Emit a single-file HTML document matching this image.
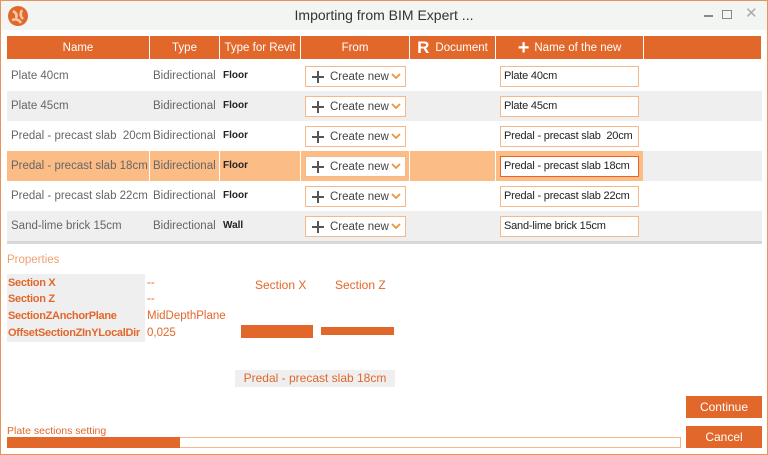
<!DOCTYPE html>
<html><head><meta charset="utf-8"><style>
*{margin:0;padding:0;box-sizing:border-box}
body{width:768px;height:455px;background:#fff;font-family:"Liberation Sans",sans-serif;font-size:11px;position:relative;overflow:hidden;color:#555}
.abs{position:absolute;white-space:nowrap}
.win{left:0;top:0;width:768px;height:455px;border:1px solid #e8935c}
.title{left:1px;top:1px;width:766px;height:29px;background:#f3f5f3}
.hd{top:36px;height:23px;background:#e2672a;color:#fff;font-size:11.5px;display:flex;align-items:center;justify-content:center}
.row{left:7px;width:755px;height:30px}
.cell{position:absolute;top:0;height:30px;line-height:30px;white-space:nowrap;font-size:11.5px;color:#666}
.combo{position:absolute;left:298px;top:5px;width:101px;height:21px;border:1px solid #f5b88a;background:#fff;line-height:20px;color:#444;font-size:11.5px;padding-left:24px;white-space:nowrap}
.combo:before{content:"";position:absolute;left:6px;top:9px;width:12px;height:2px;background:#555}
.combo:after{content:"";position:absolute;left:11px;top:4px;width:2px;height:12px;background:#555}
.chev{position:absolute;right:4px;top:5px}
.inp{position:absolute;left:493px;top:5px;width:139px;height:21px;border:1px solid #f5b88a;background:#fff;line-height:19px;color:#222;font-size:11px;letter-spacing:-0.2px;padding-left:3px;white-space:nowrap;overflow:hidden}
.or{color:#e2672a}
.pl{left:7px;width:138px;height:17px;line-height:17px;font-weight:bold;color:#e2672a;font-size:11px;letter-spacing:-0.3px;padding-left:1px;overflow:hidden}
.pv{left:147px;height:17px;line-height:17px;color:#e2672a;font-size:11.5px}
.btn{left:686px;width:76px;height:22px;background:#e2672a;color:#fff;text-align:center;line-height:22px;font-size:12px}
</style></head><body>
<div class="abs win"></div>
<div class="abs title"></div>
<svg class="abs" style="left:6px;top:5px" width="24" height="22" viewBox="0 0 24 22"><circle cx="12" cy="11" r="10" fill="#e2672a"/><path d="M7 6 Q12 9 10 13 M16 5 Q13 10 17 14 M6 15 Q12 13 15 18" stroke="#f7c9a8" stroke-width="2.5" fill="none"/></svg>
<div class="abs" style="left:0;width:768px;top:7px;text-align:center;font-size:14px;color:#333">Importing from BIM Expert ...</div>
<div class="abs" style="left:704px;top:15px;width:9px;height:2px;background:#888"></div>
<div class="abs" style="left:722px;top:10px;width:10px;height:9px;border:1.5px solid #888"></div>
<div class="abs" style="left:745px;top:4px;color:#aaa;font-size:15px">✕</div>

<div class="abs hd" style="left:7px;width:142px">Name</div>
<div class="abs hd" style="left:150px;width:69px">Type</div>
<div class="abs hd" style="left:220px;width:80px">Type for Revit</div>
<div class="abs hd" style="left:301px;width:108px">From</div>
<div class="abs hd" style="left:410px;width:85px"><b style="font-size:17px;margin-right:6px">R</b>Document</div>
<div class="abs hd" style="left:496px;width:147px"><b style="font-size:20px;margin-right:5px;line-height:10px">+</b>Name of the new</div>
<div class="abs hd" style="left:644px;width:117px"></div>

<div class="abs row" style="top:61px;background:#fff">
<div class="cell" style="left:4px">Plate 40cm</div><div class="cell" style="left:146px">Bidirectional</div><div class="cell" style="left:216px;font-weight:bold;font-size:10px;color:#222">Floor</div><div class="combo">Create new<svg class="chev" width="10" height="8"><path d="M1 2 L5 6 L9 2" stroke="#f0923c" stroke-width="1.8" fill="none"/></svg></div><div class="inp">Plate 40cm</div></div>
<div class="abs row" style="top:91px;background:#efefef">
<div class="cell" style="left:4px">Plate 45cm</div><div class="cell" style="left:146px">Bidirectional</div><div class="cell" style="left:216px;font-weight:bold;font-size:10px;color:#222">Floor</div><div class="combo">Create new<svg class="chev" width="10" height="8"><path d="M1 2 L5 6 L9 2" stroke="#f0923c" stroke-width="1.8" fill="none"/></svg></div><div class="inp">Plate 45cm</div></div>
<div class="abs row" style="top:121px;background:#fff">
<div class="cell" style="left:4px">Predal - precast slab&nbsp; 20cm</div><div class="cell" style="left:146px">Bidirectional</div><div class="cell" style="left:216px;font-weight:bold;font-size:10px;color:#222">Floor</div><div class="combo">Create new<svg class="chev" width="10" height="8"><path d="M1 2 L5 6 L9 2" stroke="#f0923c" stroke-width="1.8" fill="none"/></svg></div><div class="inp">Predal - precast slab&nbsp; 20cm</div></div>
<div class="abs row" style="top:151px;background:#efefef">
<div class="cell" style="left:0;width:636px;background:#fbbc85"></div>
<div class="cell" style="left:142px;width:1px;background:#fff"></div><div class="cell" style="left:212px;width:1px;background:#fff"></div><div class="cell" style="left:293px;width:1px;background:#fff"></div><div class="cell" style="left:402px;width:1px;background:#fff"></div><div class="cell" style="left:488px;width:1px;background:#fff"></div>
<div class="cell" style="left:4px">Predal - precast slab 18cm</div><div class="cell" style="left:146px">Bidirectional</div><div class="cell" style="left:216px;font-weight:bold;font-size:10px;color:#222">Floor</div><div class="combo">Create new<svg class="chev" width="10" height="8"><path d="M1 2 L5 6 L9 2" stroke="#f0923c" stroke-width="1.8" fill="none"/></svg></div><div class="inp" style="border-color:#e2672a">Predal - precast slab 18cm</div></div>
<div class="abs row" style="top:181px;background:#fff">
<div class="cell" style="left:4px">Predal - precast slab 22cm</div><div class="cell" style="left:146px">Bidirectional</div><div class="cell" style="left:216px;font-weight:bold;font-size:10px;color:#222">Floor</div><div class="combo">Create new<svg class="chev" width="10" height="8"><path d="M1 2 L5 6 L9 2" stroke="#f0923c" stroke-width="1.8" fill="none"/></svg></div><div class="inp">Predal - precast slab 22cm</div></div>
<div class="abs row" style="top:211px;background:#efefef">
<div class="cell" style="left:4px">Sand-lime brick 15cm</div><div class="cell" style="left:146px">Bidirectional</div><div class="cell" style="left:216px;font-weight:bold;font-size:10px;color:#222">Wall</div><div class="combo">Create new<svg class="chev" width="10" height="8"><path d="M1 2 L5 6 L9 2" stroke="#f0923c" stroke-width="1.8" fill="none"/></svg></div><div class="inp">Sand-lime brick 15cm</div></div>
<div class="abs" style="left:7px;top:241px;width:755px;height:3px;background:#d8d8d8"></div>

<div class="abs" style="left:7px;top:254px;color:#f0a070;font-size:11.5px">Properties</div>
<div class="abs" style="left:7px;top:274px;width:138px;height:68px;background:#efefef"></div>
<div class="abs pl" style="top:275px">Section X</div><div class="abs pv" style="top:275px">--</div>
<div class="abs pl" style="top:291px">Section Z</div><div class="abs pv" style="top:291px">--</div>
<div class="abs pl" style="top:308px">SectionZAnchorPlane</div><div class="abs pv" style="top:308px">MidDepthPlane</div>
<div class="abs pl" style="top:325px">OffsetSectionZInYLocalDir</div><div class="abs pv" style="top:325px">0,025</div>
<div class="abs or" style="left:255px;top:278px;font-size:12px">Section X</div>
<div class="abs or" style="left:335px;top:278px;font-size:12px">Section Z</div>
<div class="abs" style="left:241px;top:325px;width:72px;height:13px;background:#e2672a"></div>
<div class="abs" style="left:321px;top:327px;width:73px;height:8px;background:#e2672a"></div>
<div class="abs or" style="left:235px;top:370px;width:160px;height:17px;background:#efefef;text-align:center;line-height:17px;font-size:12px">Predal - precast slab 18cm</div>

<div class="abs btn" style="top:396px">Continue</div>
<div class="abs btn" style="top:426px">Cancel</div>
<div class="abs" style="left:7px;top:425px;color:#e2672a;font-size:10.5px">Plate sections setting</div>
<div class="abs" style="left:7px;top:437px;width:674px;height:11px;border:1px solid #f5b88a;background:#fff"></div>
<div class="abs" style="left:7px;top:437px;width:173px;height:11px;background:#e2672a"></div>
</body></html>
